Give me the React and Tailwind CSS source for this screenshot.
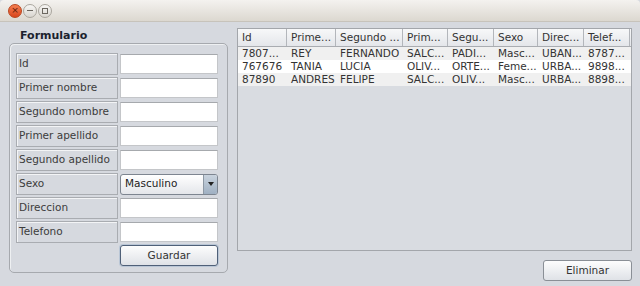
import React from 'react'

const FIELDS = ['Id', 'Primer nombre', 'Segundo nombre', 'Primer apellido', 'Segundo apellido', 'Sexo', 'Direccion', 'Telefono']

const COLUMNS = [
  { label: 'Id', w: 'w-[49px]' },
  { label: 'Prime...', w: 'w-[49px]' },
  { label: 'Segundo ...', w: 'w-[67px]' },
  { label: 'Prim...', w: 'w-[45px]' },
  { label: 'Segu...', w: 'w-[46px]' },
  { label: 'Sexo', w: 'w-[44px]' },
  { label: 'Direc...', w: 'w-[46px]' },
  { label: 'Telef...', w: 'w-[46px]' },
]

const ROWS = [
  ['7807...', 'REY', 'FERNANDO', 'SALC...', 'PADI...', 'Masc...', 'UBAN...', '8787...'],
  ['767676', 'TANIA', 'LUCIA', 'OLIV...', 'ORTE...', 'Feme...', 'URBA...', '9898...'],
  ['87890', 'ANDRES', 'FELIPE', 'SALC...', 'OLIV...', 'Masc...', 'URBA...', '8898...'],
]

function TitleButtons() {
  return (
    <div className="flex items-center gap-px pl-[8px]">
      <div className="w-[14px] h-[14px] rounded-full bg-gradient-to-b from-[#f47d4f] to-[#d9451b] border border-[#b9461f] flex items-center justify-center text-[9px] leading-none text-[#5a1a08]">×</div>
      <div className="w-[14px] h-[14px] rounded-full bg-gradient-to-b from-[#f7f6f4] to-[#d9d6d0] border border-[#aaa69e] flex items-center justify-center">
        <div className="w-[6px] h-px bg-[#6b6760]" />
      </div>
      <div className="w-[14px] h-[14px] rounded-full bg-gradient-to-b from-[#f7f6f4] to-[#d9d6d0] border border-[#aaa69e] flex items-center justify-center">
        <div className="w-[6px] h-[6px] border border-[#6b6760]" />
      </div>
    </div>
  )
}

function Field({ label }) {
  return (
    <div className="flex items-center gap-[2px] h-[22px]">
      <div className="w-[102px] h-[22px] border border-[#a9acb1] shadow-[inset_1px_1px_0_#f3f4f6] flex items-center pl-[2px] text-[#3c3c3c]">
        {label}
      </div>
      {label === 'Sexo' ? (
        <div className="w-[98px] h-[21px] rounded-[3px] border border-[#7d8590] bg-gradient-to-b from-[#ffffff] to-[#e4e6ea] flex items-center overflow-hidden">
          <span className="flex-1 pl-[4px] text-[#222]">Masculino</span>
          <div className="w-[14px] h-full bg-gradient-to-b from-[#c9d3de] to-[#9fb0c2] border-l border-[#8d98a4] flex items-center justify-center">
            <div className="w-0 h-0 border-l-[3px] border-r-[3px] border-t-[4px] border-l-transparent border-r-transparent border-t-[#222]" />
          </div>
        </div>
      ) : (
        <div className="w-[98px] h-[20px] bg-white border border-[#c4c6c9] border-t-[#a6a9ad]" />
      )}
    </div>
  )
}

function Button({ children, className }) {
  return (
    <div className={`h-[21px] rounded-[3px] bg-gradient-to-b from-[#fdfdfd] to-[#dfe2e7] flex items-center justify-center text-[#333] ${className}`}>
      {children}
    </div>
  )
}

export default function App() {
  return (
    <div className="w-[640px] h-[286px] bg-[#d6d9df] flex flex-col overflow-hidden text-[10.5px]" style={{ fontFamily: '"DejaVu Sans", sans-serif' }}>
      <div className="h-[22px] shrink-0 bg-gradient-to-b from-[#f4f2ef] to-[#dcd8d0] border-b border-[#c7c3bb] rounded-t-[4px] flex items-center">
        <TitleButtons />
      </div>
      <div className="flex-1 flex">
        <div className="ml-[9px] w-[219px] flex flex-col">
          <div className="h-[21px] pl-[11px] pt-[6px] font-bold text-[#1c1f2e] text-[11px]">Formulario</div>
          <div className="h-[230px] rounded-[5px] border border-[#a6a9ae] shadow-[inset_1px_1px_0_#eef0f2] pl-[6px] pt-[9px] flex flex-col gap-[2px]">
            {FIELDS.map((f) => (
              <Field key={f} label={f} />
            ))}
            <Button className="ml-[104px] w-[98px] border border-[#4f6078] shadow-[0_0_0_1px_#b9c6d6]">Guardar</Button>
          </div>
        </div>
        <div className="ml-[9px] w-[395px] flex flex-col">
          <div className="mt-[6px] h-[223px] border border-[#a3a6ab] bg-[#d9dce1] flex flex-col">
            <div className="flex h-[18px] bg-gradient-to-b from-[#f7f8f9] to-[#e4e6ea] border-b border-[#a9acb1]">
              {COLUMNS.map((c) => (
                <div key={c.label} className={`${c.w} shrink-0 border-r border-[#b3b6bb] pl-[4px] flex items-center text-[#333] whitespace-nowrap overflow-hidden`}>
                  {c.label}
                </div>
              ))}
            </div>
            {ROWS.map((r, i) => (
              <div key={i} className={`flex h-[13px] ${i % 2 === 1 ? 'bg-white' : 'bg-[#f0f0f0]'}`}>
                {r.map((v, j) => (
                  <div key={j} className={`${COLUMNS[j].w} shrink-0 pl-[4px] flex items-center text-[#333] whitespace-nowrap overflow-hidden leading-none`}>
                    {v}
                  </div>
                ))}
              </div>
            ))}
          </div>
          <div className="flex justify-end mt-[9px]">
            <Button className="w-[89px] h-[20px] border border-[#8a8f96]">Eliminar</Button>
          </div>
        </div>
      </div>
    </div>
  )
}
